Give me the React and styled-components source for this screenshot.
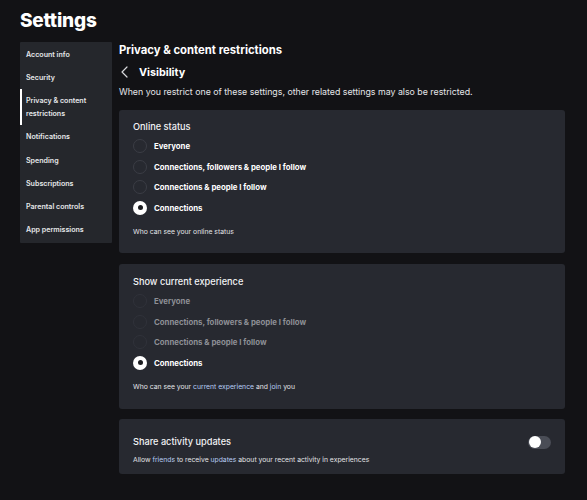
import React from "react";
import styled, { createGlobalStyle } from "styled-components";

const Global = createGlobalStyle`
  html, body { margin: 0; padding: 0; background: #121215; }
  body { font-family: Inter, "Noto Sans", sans-serif; color: #fff; -webkit-font-smoothing: antialiased; }
  * { box-sizing: border-box; }
`;

const Page = styled.div`
  width: 587px;
  height: 500px;
  padding: 9px 22px 0 20px;
  overflow: hidden;
`;

const Title = styled.h1`
  margin: 0;
  font-size: 19px;
  line-height: 24px;
  font-weight: 800;
  letter-spacing: -0.2px;
  height: 33px;
`;

const Body = styled.div`
  display: flex;
  gap: 7px;
  align-items: flex-start;
`;

const Sidebar = styled.nav`
  width: 92px;
  background: #25272c;
  border-radius: 1px;
  padding: 0.5px 0 1px;
  display: flex;
  flex-direction: column;
`;

const NavItem = styled.div`
  position: relative;
  display: flex;
  align-items: center;
  padding: ${p => (p.$active ? "5px 6px" : "0 6px")};
  min-height: 23.3px;
  font-size: 7.1px;
  line-height: 13px;
  font-weight: 600;
  color: #e6e7ea;
  &::before {
    content: "";
    display: ${p => (p.$active ? "block" : "none")};
    position: absolute;
    left: 0;
    top: 0;
    bottom: 0;
    width: 2px;
    background: #fff;
  }
`;

const Main = styled.main`
  flex: 1;
  display: flex;
  flex-direction: column;
  padding-top: 1px;
`;

const SectionHeader = styled.h2`
  margin: 0;
  font-size: 11.3px;
  line-height: 14px;
  font-weight: 700;
`;

const SubHeader = styled.div`
  display: flex;
  align-items: center;
  gap: 11px;
  margin-top: 8px;
  height: 14px;
  padding-left: 2px;
  font-size: 10.8px;
  font-weight: 700;
`;

const Description = styled.p`
  margin: 7px 0 0;
  font-size: 8.8px;
  line-height: 12px;
  color: #e4e5e8;
`;

const Card = styled.section`
  background: #272930;
  border-radius: 3px;
  margin-top: ${p => p.$mt || 10}px;
  padding: ${p => p.$pad || "10px 14px 16px"};
`;

const CardTitle = styled.div`
  font-size: 9.2px;
  line-height: 14px;
  font-weight: 500;
  color: #f2f3f5;
  margin-bottom: ${p => p.$mb ?? 2}px;
`;

const OptionRow = styled.div`
  display: flex;
  align-items: center;
  gap: 7px;
  height: 20.5px;
  font-size: 7.8px;
  font-weight: 700;
  color: ${p => (p.$disabled && !p.$selected ? "#8d8f95" : "#ffffff")};
`;

const Radio = styled.span`
  width: 14px;
  height: 14px;
  border-radius: 50%;
  flex: none;
  display: flex;
  align-items: center;
  justify-content: center;
  background: ${p => (p.$selected ? "#ffffff" : "transparent")};
  border: ${p => (p.$selected ? "none" : `1px solid ${p.$disabled ? "#30323a" : "#3b3d45"}`)};
  &::after {
    content: "";
    display: ${p => (p.$selected ? "block" : "none")};
    width: 5px;
    height: 5px;
    border-radius: 50%;
    background: #1b1c20;
  }
`;

const Caption = styled.div`
  margin-top: ${p => p.$mt || 9}px;
  font-size: 6.8px;
  line-height: 10px;
  color: #e2e3e6;
`;

const Link = styled.span`
  color: #b7cdf5;
`;

const ToggleRow = styled.div`
  display: flex;
  align-items: center;
  justify-content: space-between;
`;

const Toggle = styled.span`
  width: 23px;
  height: 13px;
  border-radius: 7px;
  background: #4a4d56;
  display: flex;
  align-items: center;
  padding: 0 1px;
  &::after {
    content: "";
    width: 12px;
    height: 12px;
    border-radius: 50%;
    background: #fff;
  }
`;

const navItems = [
  "Account info",
  "Security",
  "Privacy & content restrictions",
  "Notifications",
  "Spending",
  "Subscriptions",
  "Parental controls",
  "App permissions",
];

const options = [
  "Everyone",
  "Connections, followers & people I follow",
  "Connections & people I follow",
  "Connections",
];

function RadioGroup({ disabled }) {
  return options.map((o, i) => {
    const selected = i === 3;
    return (
      <OptionRow key={o} $disabled={disabled} $selected={selected}>
        <Radio $selected={selected} $disabled={disabled} />
        {o}
      </OptionRow>
    );
  });
}

export default function App() {
  return (
    <>
      <Global />
      <Page>
        <Title>Settings</Title>
        <Body>
          <Sidebar>
            {navItems.map((n, i) => (
              <NavItem key={n} $active={i === 2}>
                {i === 2 ? (
                  <span>
                    Privacy &amp; content
                    <br />
                    restrictions
                  </span>
                ) : (
                  n
                )}
              </NavItem>
            ))}
          </Sidebar>
          <Main>
            <SectionHeader>Privacy &amp; content restrictions</SectionHeader>
            <SubHeader>
              <svg width="7" height="12" viewBox="0 0 7 12" fill="none">
                <path d="M6 1L1 6L6 11" stroke="#d8d9dc" strokeWidth="1.2" strokeLinecap="round" strokeLinejoin="round" />
              </svg>
              Visibility
            </SubHeader>
            <Description>
              When you restrict one of these settings, other related settings may also be restricted.
            </Description>
            <Card $mt={12}>
              <CardTitle>Online status</CardTitle>
              <RadioGroup />
              <Caption>Who can see your online status</Caption>
            </Card>
            <Card $mt={11} $pad="11px 14px 17px">
              <CardTitle>Show current experience</CardTitle>
              <RadioGroup disabled />
              <Caption>
                Who can see your <Link>current experience</Link> and <Link>join</Link> you
              </Caption>
            </Card>
            <Card $pad="16px 14px 9px">
              <ToggleRow>
                <CardTitle $mb={0}>Share activity updates</CardTitle>
                <Toggle />
              </ToggleRow>
              <Caption $mt={6}>
                Allow <Link>friends</Link> to receive <Link>updates</Link> about your recent activity in experiences
              </Caption>
            </Card>
          </Main>
        </Body>
      </Page>
    </>
  );
}
